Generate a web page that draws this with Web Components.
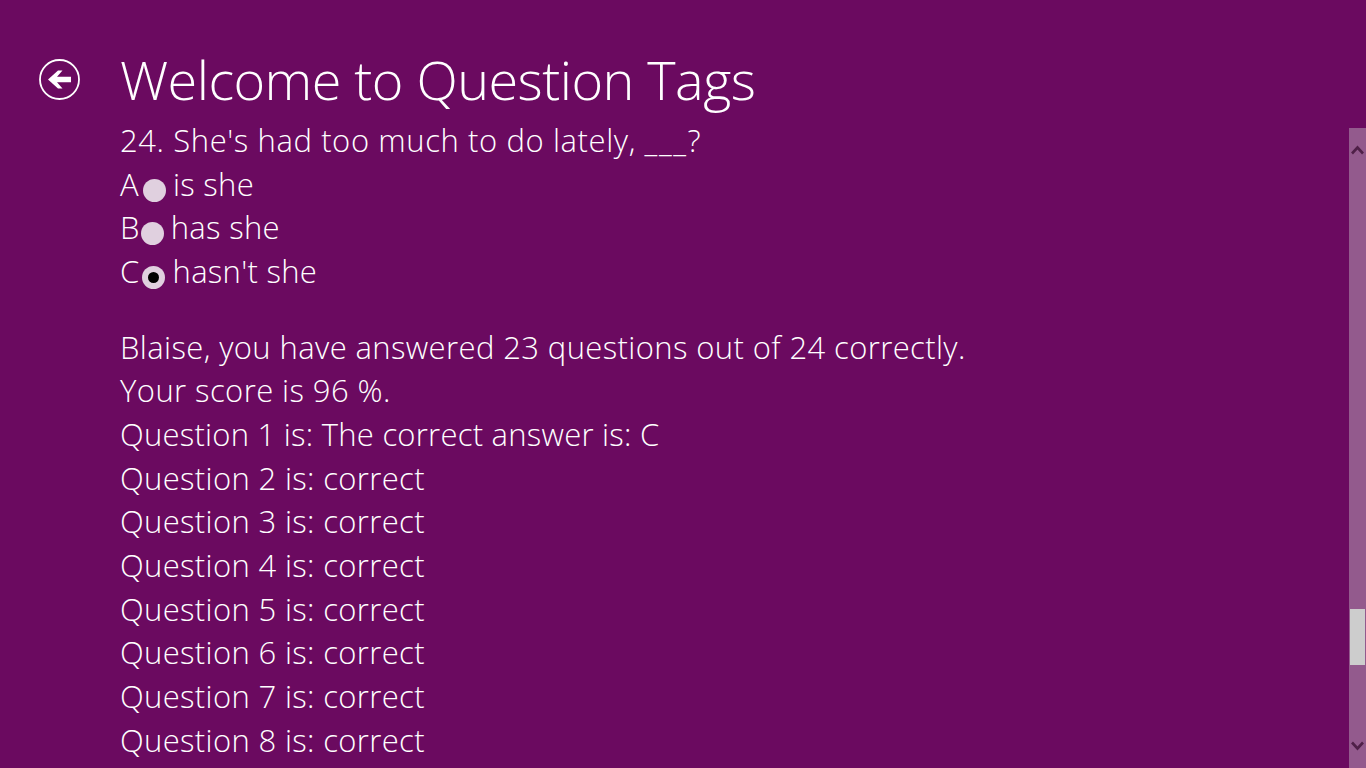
<!DOCTYPE html>
<html>
<head>
<meta charset="utf-8">
<title>Welcome to Question Tags</title>
<style>
  html, body { margin: 0; height: 100%; overflow: hidden; background: #6b0a60; }
  body { font-family: "Open Sans", "Liberation Sans", sans-serif; font-weight: 300; color: #fff; }
</style>
</head>
<body>
<quiz-page>
  <span slot="title">Welcome to Question Tags</span>
  <quiz-question text="24. She's had too much to do lately, " blank="___?">
    <quiz-option letter="A" label="is she" gap="4" after="7" drop="12"></quiz-option>
    <quiz-option letter="B" label="has she" gap="1" after="7" drop="10"></quiz-option>
    <quiz-option letter="C" label="hasn't she" gap="2" after="8" drop="12" checked></quiz-option>
  </quiz-question>
  <quiz-results name="Blaise" right="23" total="24" score="96"></quiz-results>
</quiz-page>
<script>
class QuizPage extends HTMLElement {
  constructor() {
    super();
    const shadow = this.attachShadow({ mode: "open" });
    shadow.innerHTML = `
      <style>
        :host { display: grid; grid-template-rows: 128px 640px; height: 768px; background: #6b0a60; }
        header { display: flex; padding: 0 0 0 39px; }
        button { all: unset; width: 41px; height: 41px; margin: 59px 40px 0 0; }
        button svg { display: block; }
        h1 { margin: 46px 0 0; font-size: 54px; line-height: 67px; font-weight: 300; letter-spacing: -0.55px; white-space: nowrap; }
        .body { display: flex; min-height: 0; }
        .content { flex: 1; overflow: hidden; padding-left: 120px; }
        .inner { margin-top: -9px; }
      </style>
      <header>
        <button aria-label="Back">
          <svg width="41" height="41" viewBox="0 0 41 41">
            <circle cx="20.5" cy="20.5" r="19.5" fill="none" stroke="#fff" stroke-width="1.8"/>
            <path d="M9 20.5 L19 11.5 H23.5 L18 17.7 H32 V23.3 H18 L23.5 29.5 H19 Z" fill="#fff"/>
          </svg>
        </button>
        <h1><slot name="title"></slot></h1>
      </header>
      <div class="body">
        <div class="content"><div class="inner"><slot></slot></div></div>
        <quiz-scrollbar></quiz-scrollbar>
      </div>`;
  }
}

class QuizScrollbar extends HTMLElement {
  constructor() {
    super();
    const shadow = this.attachShadow({ mode: "open" });
    shadow.innerHTML = `
      <style>
        :host { display: flex; flex-direction: column; align-items: center; width: 17px; height: 640px; background: #935a8d; }
        svg { display: block; flex: none; }
        .up { margin-top: 16px; }
        .thumb { width: 15px; height: 56px; margin-top: 453px; background: #cdcdcd; }
        .down { margin-top: 75px; }
      </style>
      <svg class="up" width="13" height="12" viewBox="0 0 13 12"><path d="M1 9.5 L6.5 3.5 L12 9.5" fill="none" stroke="#4f2048" stroke-width="2.6"/></svg>
      <div class="thumb"></div>
      <svg class="down" width="13" height="12" viewBox="0 0 13 12"><path d="M1 2.5 L6.5 8.5 L12 2.5" fill="none" stroke="#4f2048" stroke-width="2.6"/></svg>`;
  }
}

class QuizQuestion extends HTMLElement {
  constructor() {
    super();
    const shadow = this.attachShadow({ mode: "open" });
    shadow.innerHTML = `
      <style>
        :host { display: block; font-size: 31px; line-height: 43.67px; letter-spacing: 0.3px; white-space: nowrap; }
        #q { letter-spacing: 0.6px; }
        #b { letter-spacing: 1.6px; }
      </style>
      <div><span id="q"></span><span id="b"></span></div>
      <slot></slot>`;
    shadow.getElementById("q").textContent = this.getAttribute("text");
    shadow.getElementById("b").textContent = this.getAttribute("blank");
  }
}

class QuizOption extends HTMLElement {
  constructor() {
    super();
    const shadow = this.attachShadow({ mode: "open" });
    const gap = this.getAttribute("gap") || 2;
    const after = this.getAttribute("after") || 7;
    const drop = this.getAttribute("drop") || 10;
    shadow.innerHTML = `
      <style>
        :host { display: flex; align-items: center; height: 43.67px; }
        .radio { position: relative; box-sizing: border-box; width: 23px; height: 23px; margin: ${drop}px ${after}px 0 ${gap}px; border-radius: 50%; background: #e0d0df; }
        :host([checked]) .radio::after { content: ""; position: absolute; left: 6px; top: 6px; width: 11px; height: 11px; border-radius: 50%; background: #000; }
      </style>
      <span class="l"></span><span class="radio"></span><span class="t"></span>`;
    shadow.querySelector(".l").textContent = this.getAttribute("letter");
    shadow.querySelector(".t").textContent = this.getAttribute("label");
  }
}

class QuizResults extends HTMLElement {
  constructor() {
    super();
    const shadow = this.attachShadow({ mode: "open" });
    const name = this.getAttribute("name");
    const right = this.getAttribute("right");
    const total = this.getAttribute("total");
    const lines = [
      [`${name}, you have answered ${right} questions out of ${total} correctly.`, 0.39],
      [`Your score is ${this.getAttribute("score")} %.`, 0.42],
      ["Question 1 is: The correct answer is: C", 0.25]
    ];
    for (let i = 2; i <= 8; i++) {
      lines.push([`Question ${i} is: correct`, 0.35]);
    }
    shadow.innerHTML = `
      <style>
        :host { display: block; margin-top: 32px; font-size: 31px; line-height: 43.67px; white-space: nowrap; }
      </style>
      ${lines.map(([line, spacing]) => `<div style="letter-spacing:${spacing}px">${line}</div>`).join("")}`;
  }
}

customElements.define("quiz-scrollbar", QuizScrollbar);
customElements.define("quiz-option", QuizOption);
customElements.define("quiz-question", QuizQuestion);
customElements.define("quiz-results", QuizResults);
customElements.define("quiz-page", QuizPage);
</script>
</body>
</html>
